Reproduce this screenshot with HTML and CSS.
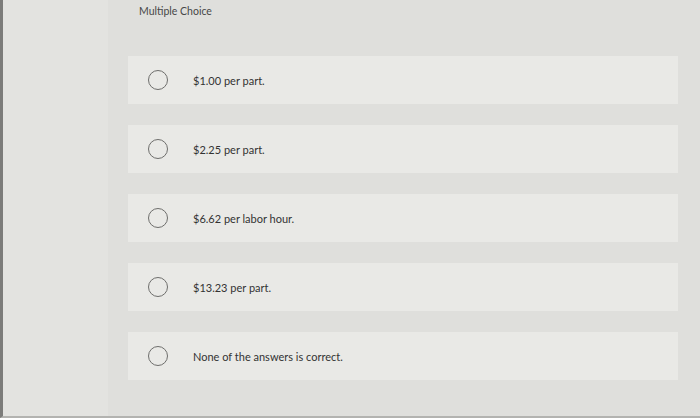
FILE: index.html
```html
<!DOCTYPE html>
<html>
<head>
<meta charset="utf-8">
<link rel="stylesheet" href="styles.css">
</head>
<body>
<div class="frame">
  <aside class="side"></aside>
  <main class="main">
    <div class="title">Multiple Choice</div>
    <ul class="options">
      <li class="option"><span class="radio"></span><span class="label">$1.00 per part.</span></li>
      <li class="option"><span class="radio"></span><span class="label">$2.25 per part.</span></li>
      <li class="option"><span class="radio"></span><span class="label">$6.62 per labor hour.</span></li>
      <li class="option"><span class="radio"></span><span class="label">$13.23 per part.</span></li>
      <li class="option"><span class="radio"></span><span class="label">None of the answers is correct.</span></li>
    </ul>
  </main>
</div>
</body>
</html>
```

FILE: styles.css
```css
html, body {
  margin: 0;
  padding: 0;
  width: 700px;
  height: 418px;
  overflow: hidden;
  background: #dcdcd9;
  font-family: Lato, "Open Sans", sans-serif;
  color: #3b3b3b;
}
.frame {
  display: flex;
  width: 700px;
  height: 418px;
  border-left: 3px solid #7c7c7a;
  border-bottom: 2px solid #b3b3b0;
  box-sizing: border-box;
}
.side {
  width: 105px;
  flex: none;
  background: #e3e3e0;
}
.main {
  flex: 1;
  background: #dfdfdc;
  padding-left: 20px;
  padding-right: 22px;
}
.title {
  font-size: 10.5px;
  padding-left: 11px;
  margin-top: 5px;
  line-height: 13px;
  color: #474747;
}
.options {
  list-style: none;
  margin: 38px 0 0 0;
  padding: 0;
  display: flex;
  flex-direction: column;
  gap: 21px;
}
.option {
  height: 48px;
  background: #e9e9e6;
  display: flex;
  align-items: center;
  padding-left: 20px;
}
.radio {
  width: 18px;
  height: 18px;
  border: 1.3px solid #6e6e6c;
  border-radius: 50%;
  flex: none;
}
.label {
  margin-left: 25px;
  font-size: 11px;
  color: #333;
}
```
